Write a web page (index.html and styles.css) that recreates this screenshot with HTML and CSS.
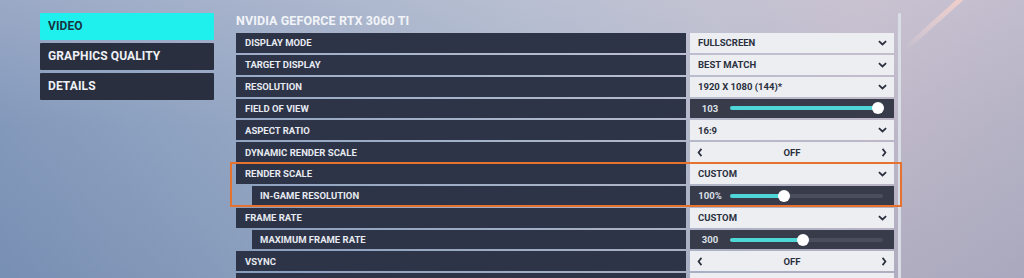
FILE: index.html
```html
<!DOCTYPE html>
<html lang="en">
<head>
<meta charset="utf-8">
<title>Video settings</title>
<link rel="stylesheet" href="styles.css">
</head>
<body>
<div class="screen">
  <svg class="streak" width="80" height="60" viewBox="0 0 80 60" aria-hidden="true">
    <defs>
      <linearGradient id="sg" x1="1" y1="0" x2="0" y2="1">
        <stop offset="0" stop-color="#ffd2c8" stop-opacity="0.75"/>
        <stop offset="0.6" stop-color="#ffdcd4" stop-opacity="0.35"/>
        <stop offset="1" stop-color="#ffe4de" stop-opacity="0"/>
      </linearGradient>
    </defs>
    <line x1="62" y1="-2" x2="4" y2="50" stroke="url(#sg)" stroke-width="5" stroke-linecap="round"/>
  </svg>

  <nav class="menu">
    <div class="menu-item active">VIDEO</div>
    <div class="menu-item">GRAPHICS QUALITY</div>
    <div class="menu-item">DETAILS</div>
  </nav>

  <main class="panel">
    <h1 class="gpu">NVIDIA GEFORCE RTX 3060 TI</h1>
    <div class="rows">
      <div class="row">
        <div class="label">DISPLAY MODE</div>
        <div class="value select"><span>FULLSCREEN</span><svg class="chev" viewBox="0 0 10 6"><path d="M1 1 L5 4.6 L9 1"/></svg></div>
      </div>
      <div class="row">
        <div class="label">TARGET DISPLAY</div>
        <div class="value select"><span>BEST MATCH</span><svg class="chev" viewBox="0 0 10 6"><path d="M1 1 L5 4.6 L9 1"/></svg></div>
      </div>
      <div class="row">
        <div class="label">RESOLUTION</div>
        <div class="value select"><span>1920 X 1080 (144)*</span><svg class="chev" viewBox="0 0 10 6"><path d="M1 1 L5 4.6 L9 1"/></svg></div>
      </div>
      <div class="row">
        <div class="label">FIELD OF VIEW</div>
        <div class="value slider"><span class="num">103</span><div class="track"><div class="fill" style="width:96.5%"><i class="thumb"></i></div></div></div>
      </div>
      <div class="row">
        <div class="label">ASPECT RATIO</div>
        <div class="value select"><span>16:9</span><svg class="chev" viewBox="0 0 10 6"><path d="M1 1 L5 4.6 L9 1"/></svg></div>
      </div>
      <div class="row">
        <div class="label">DYNAMIC RENDER SCALE</div>
        <div class="value toggle"><svg class="arr" viewBox="0 0 6 10"><path d="M4.6 1 L1.4 5 L4.6 9"/></svg><span>OFF</span><svg class="arr" viewBox="0 0 6 10"><path d="M1.4 1 L4.6 5 L1.4 9"/></svg></div>
      </div>
      <div class="group">
        <div class="row">
          <div class="label">RENDER SCALE</div>
          <div class="value select"><span>CUSTOM</span><svg class="chev" viewBox="0 0 10 6"><path d="M1 1 L5 4.6 L9 1"/></svg></div>
        </div>
        <div class="row sub">
          <div class="label">IN-GAME RESOLUTION</div>
          <div class="value slider"><span class="num">100%</span><div class="track"><div class="fill" style="width:35%"><i class="thumb"></i></div></div></div>
        </div>
      </div>
      <div class="row">
        <div class="label">FRAME RATE</div>
        <div class="value select"><span>CUSTOM</span><svg class="chev" viewBox="0 0 10 6"><path d="M1 1 L5 4.6 L9 1"/></svg></div>
      </div>
      <div class="row sub">
        <div class="label">MAXIMUM FRAME RATE</div>
        <div class="value slider"><span class="num">300</span><div class="track"><div class="fill" style="width:47.5%"><i class="thumb"></i></div></div></div>
      </div>
      <div class="row">
        <div class="label">VSYNC</div>
        <div class="value toggle"><svg class="arr" viewBox="0 0 6 10"><path d="M4.6 1 L1.4 5 L4.6 9"/></svg><span>OFF</span><svg class="arr" viewBox="0 0 6 10"><path d="M1.4 1 L4.6 5 L1.4 9"/></svg></div>
      </div>
      <div class="row">
        <div class="label"></div>
        <div class="value select"></div>
      </div>
    </div>
  </main>

  <div class="scrollbar"></div>
</div>
</body>
</html>
```

FILE: styles.css
```css
* { box-sizing: border-box; }
html, body {
  margin: 0;
  padding: 0;
  width: 1024px;
  height: 278px;
  overflow: hidden;
}
body {
  font-family: Roboto, "Liberation Sans", Arial, sans-serif;
  font-weight: 700;
}
.screen {
  position: relative;
  width: 1024px;
  height: 278px;
  overflow: hidden;
  display: flex;
  align-items: flex-start;
  padding: 13px 0 0 40px;
  background:
    linear-gradient(180deg, rgba(235,225,235,0.28) 0%, rgba(220,220,235,0.08) 45%, rgba(90,110,150,0.10) 100%),
    linear-gradient(90deg, #7b93b7 0%, #8ea2c0 25%, #a3b1c7 50%, #b3b7c9 70%, #bcb5c6 85%, #b2afc2 100%);
}
.streak {
  position: absolute;
  left: 900px;
  top: 0;
}

/* left menu */
.menu {
  width: 174px;
  display: flex;
  flex-direction: column;
  gap: 3px;
  margin-right: 22px;
}
.menu-item {
  height: 27px;
  line-height: 27px;
  padding-left: 8px;
  font-size: 12px;
  color: #eef1f6;
  background: #2a2f3f;
  border-radius: 1px;
  letter-spacing: 0.1px;
}
.menu-item.active {
  background: #1ff0ee;
  color: #173640;
}

/* main panel */
.panel {
  width: 658px;
}
.gpu {
  margin: 0 0 4px 0;
  height: 16px;
  line-height: 16px;
  font-size: 12.5px;
  font-weight: 700;
  color: #f2f4f8;
  letter-spacing: 0.1px;
}
.rows {
  display: flex;
  flex-direction: column;
  gap: 2px;
}
.group {
  position: relative;
  display: flex;
  flex-direction: column;
  gap: 2px;
}
.group::after {
  content: "";
  position: absolute;
  top: -2px;
  left: -6px;
  right: -8px;
  bottom: -1px;
  border: 2px solid #e5722f;
  pointer-events: none;
}
.row {
  display: grid;
  grid-template-columns: 450px 204px;
  column-gap: 4px;
  height: 19.85px;
  font-size: 9.5px;
}
.label {
  background: #2e3447;
  color: #e6eaf1;
  padding-left: 9px;
  display: flex;
  align-items: center;
}
.row.sub .label {
  margin-left: 16px;
  padding-left: 8px;
}
.value {
  display: flex;
  align-items: center;
}
.select {
  background: #eceef2;
  color: #2b303e;
  justify-content: space-between;
  padding: 0 7px 0 8px;
}
.chev {
  width: 9px;
  height: 6px;
  fill: none;
  stroke: #2b303e;
  stroke-width: 2;
}
.toggle {
  background: #eceef2;
  color: #2b303e;
  justify-content: space-between;
  padding: 0 7px 0 7px;
}
.arr {
  width: 6px;
  height: 9px;
  fill: none;
  stroke: #2b303e;
  stroke-width: 1.9;
}
.slider {
  background: #373b4a;
  color: #dde1e8;
  padding: 0 11px 0 6px;
}
.num {
  width: 28px;
  text-align: center;
  margin-right: 6px;
}
.track {
  flex: 1;
  height: 4px;
  border-radius: 2px;
  background: #4b4f5d;
  position: relative;
}
.fill {
  position: relative;
  height: 4px;
  border-radius: 2px;
  background: #4fd6d6;
}
.thumb {
  position: absolute;
  right: -6px;
  top: -4px;
  width: 12px;
  height: 12px;
  border-radius: 50%;
  background: #ffffff;
}

/* scrollbar */
.scrollbar {
  width: 3px;
  height: 280px;
  margin-left: 4px;
  background: #d9dde5;
  border-radius: 1px;
}
```
